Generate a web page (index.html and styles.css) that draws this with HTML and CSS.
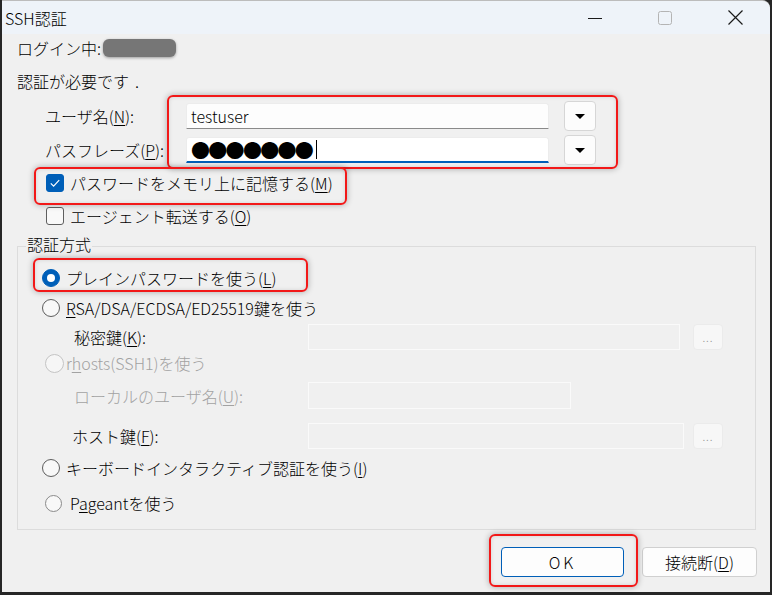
FILE: index.html
```html
<!DOCTYPE html>
<html lang="ja">
<head>
<meta charset="utf-8">
<title>SSH認証</title>
<link rel="stylesheet" href="styles.css">
</head>
<body>
<div class="page">
  <div class="window">
    <div class="titlebar">
      <span class="title">SSH認証</span>
      <div class="controls">
        <div class="ctl"><svg width="16" height="16" viewBox="0 0 16 16"><path d="M1 8.5h14" stroke="#1a1a1a" stroke-width="1"/></svg></div>
        <div class="ctl"><svg width="16" height="16" viewBox="0 0 16 16"><rect x="1.5" y="1.5" width="13" height="13" rx="2" fill="none" stroke="#b4b4b4" stroke-width="1"/></svg></div>
        <div class="ctl"><svg width="17" height="17" viewBox="0 0 17 17"><path d="M1.5 1.5l14 14M15.5 1.5l-14 14" stroke="#1a1a1a" stroke-width="1.2"/></svg></div>
      </div>
    </div>
    <div class="content">
      <div class="row login">ログイン中:<span class="blur"></span></div>
      <div class="row need">認証が必要です<span class="dot">.</span></div>

      <div class="field user">
        <span class="flabel">ユーザ名(<u>N</u>):</span>
        <div class="input">testuser</div>
        <div class="dd"><span class="tri"></span></div>
      </div>
      <div class="field pass">
        <span class="flabel">パスフレーズ(<u>P</u>):</span>
        <div class="input focus"><span class="dots">●●●●●●●</span><span class="caret"></span></div>
        <div class="dd"><span class="tri"></span></div>
      </div>

      <div class="check c1">
        <span class="box on"><svg width="18" height="18" viewBox="0 0 18 18"><path d="M4.8 9.3l2.8 2.8 5.6-6" fill="none" stroke="#fff" stroke-width="1.2"/></svg></span>
        <span>パスワードをメモリ上に記憶する(<u>M</u>)</span>
      </div>
      <div class="check c2">
        <span class="box"></span>
        <span>エージェント転送する(<u>O</u>)</span>
      </div>

      <fieldset class="group">
        <legend>認証方式</legend>
        <div class="radio r1"><span class="rb on"></span><span>プレインパスワードを使う(<u>L</u>)</span></div>
        <div class="radio r2"><span class="rb"></span><span><u>R</u>SA/DSA/ECDSA/ED25519鍵を使う</span></div>
        <div class="sub s1"><span class="slabel">秘密鍵(<u>K</u>):</span><div class="dis w372"></div><div class="more">...</div></div>
        <div class="radio r3 disabled"><span class="rb dim"></span><span>r<u>h</u>osts(SSH1)を使う</span></div>
        <div class="sub s2 disabled"><span class="slabel">ローカルのユーザ名(<u>U</u>):</span><div class="dis w263"></div></div>
        <div class="sub s3"><span class="slabel wide">ホスト鍵(<u>F</u>):</span><div class="dis w376"></div><div class="more">...</div></div>
        <div class="radio r4"><span class="rb"></span><span>キーボードインタラクティブ認証を使う(<u>I</u>)</span></div>
        <div class="radio r5"><span class="rb small"></span><span>P<u>a</u>geantを使う</span></div>
      </fieldset>

      <div class="buttons">
        <div class="btn ok">OK</div>
        <div class="btn">接続断(<u>D</u>)</div>
      </div>
    </div>
  </div>

  <div class="hl hl1"></div>
  <div class="hl hl2"></div>
  <div class="hl hl3"></div>
  <div class="hl hl4"></div>
</div>
</body>
</html>
```
FILE: styles.css
```css
* { box-sizing: border-box; }
html, body { margin: 0; padding: 0; }
body {
  background: #262626;
  font-family: "Noto Sans CJK JP", "Noto Sans", sans-serif;
  font-size: 16px;
  font-weight: 300;
  color: #000;
}
.page {
  position: relative;
  width: 772px;
  height: 595px;
  overflow: hidden;
}
.window {
  margin-left: 2px;
  width: 768px;
  height: 592px;
  background: #f0f0f0;
  border-top: 1px solid #bcbcbc;
  border-top-right-radius: 8px;
  overflow: hidden;
  display: flex;
  flex-direction: column;
}
.titlebar {
  height: 33px;
  background: #eef3f9;
  display: flex;
  align-items: center;
}
.title {
  padding-left: 3px;
  line-height: 20px;
  margin-top: 1px;
}
.controls {
  margin-left: auto;
  display: flex;
}
.ctl {
  width: 70px;
  height: 33px;
  display: flex;
  align-items: center;
  justify-content: center;
}
.ctl svg { display: block; }

.content { display: flex; flex-direction: column; }
.row {
  padding-left: 15px;
  height: 20px;
  line-height: 20px;
  display: flex;
  align-items: center;
}
.login { margin-top: 4px; }
.need { margin-top: 13px; }
.dot { margin-left: 6px; }
.blur {
  display: inline-block;
  margin-left: 2px;
  width: 73px;
  height: 18px;
  background: #767676;
  border-radius: 6px;
  filter: blur(0.6px);
  box-shadow: 0 1px 3px rgba(0,0,0,0.35);
}

.field {
  height: 30px;
  padding-left: 43px;
  display: flex;
  align-items: center;
}
.user { margin-top: 10px; }
.pass { margin-top: 4px; }
.flabel { width: 141px; line-height: 20px; }
u { text-decoration: underline; text-underline-offset: 2px; text-decoration-thickness: 1px; }
.input {
  width: 363px;
  height: 26px;
  background: #fdfdfd;
  border: 1px solid #ececec;
  border-bottom: 1px solid #8a8a8a;
  border-radius: 3px 3px 0 0;
  padding-left: 4px;
  line-height: 24px;
  margin-right: 15px;
  display: flex;
  align-items: center;
}
.input.focus {
  height: 26px;
  background: #fff;
  border-bottom: 2px solid #005fb8;
}
.dots {
  font-size: 19px;
  font-weight: 400;
  letter-spacing: -1.7px;
  line-height: 22px;
}
.caret {
  display: inline-block;
  width: 1px;
  height: 19px;
  background: #000;
  margin-left: 4px;
}
.dd {
  width: 32px;
  height: 30px;
  background: #fcfcfc;
  border: 1px solid #d6d6d6;
  border-radius: 4px;
  display: flex;
  align-items: center;
  justify-content: center;
}
.tri {
  width: 0; height: 0;
  border-left: 5px solid transparent;
  border-right: 5px solid transparent;
  border-top: 5px solid #000;
}

.check {
  height: 18px;
  padding-left: 44px;
  display: flex;
  align-items: center;
  gap: 6px;
  line-height: 20px;
}
.c1 { margin-top: 9px; }
.c2 { margin-top: 15px; }
.box {
  width: 18px;
  height: 18px;
  border: 1px solid #5f5f5f;
  border-radius: 3px;
  background: #f9f9f9;
  display: block;
}
.box.on {
  background: #005fb8;
  border-color: #005fb8;
}
.box svg { display: block; margin: -1px; }

.group {
  margin: 11px 14px 0 15px;
  padding: 0 0 17px 0;
  border: 1px solid #dcdcdc;
  min-width: 0;
}
.group legend {
  margin-left: 8px;
  padding: 0 1px;
  line-height: 16px;
  height: 20px;
}
.radio {
  height: 18px;
  padding-left: 24px;
  display: flex;
  align-items: center;
  gap: 6px;
  line-height: 20px;
}
.r1 { margin-top: 13px; }
.r2 { margin-top: 12px; }
.r3 { margin-top: 4px; gap: 2px; }
.r4 { margin-top: 10px; }
.r5 { margin-top: 17px; gap: 8px; }
.rb {
  width: 18px;
  height: 18px;
  border-radius: 50%;
  border: 1px solid #5d5d5d;
  background: #f8f8f8;
  display: block;
  flex: none;
}
.rb.on {
  background: #005fb8;
  border-color: #005fb8;
  position: relative;
}
.rb.on::after {
  content: "";
  position: absolute;
  left: 4px; top: 4px;
  width: 8px; height: 8px;
  border-radius: 50%;
  background: #fff;
}
.rb.dim {
  width: 19px; height: 19px;
  margin-left: 3px;
  border-color: #c4c4c4;
  background: #f6f6f6;
}
.rb.small {
  width: 17px; height: 17px;
  margin-left: 3px;
  border-color: #8a8a8a;
}
.disabled { color: #a2a2a2; }

.sub {
  display: flex;
  align-items: center;
  padding-left: 56px;
  line-height: 20px;
}
.s1 { margin-top: 7px; height: 26px; }
.s2 { margin-top: 10px; height: 27px; }
.s3 { margin-top: 14px; height: 26px; padding-left: 54px; }
.slabel { width: 234px; flex: none; }
.slabel.wide { width: 236px; }
.dis {
  height: 100%;
  border: 1px solid #fafafa;
  background: #f0f0f0;
  flex: none;
}
.w372 { width: 372px; margin-right: 13px; }
.w376 { width: 376px; margin-right: 9px; }
.w263 { width: 263px; }
.more {
  width: 30px;
  height: 26px;
  background: #f7f7f7;
  border: 1px solid #ebebeb;
  border-radius: 4px;
  color: #9a9a9a;
  font-size: 11px;
  letter-spacing: 1px;
  text-align: center;
  line-height: 24px;
  flex: none;
}

.buttons {
  margin-top: 17px;
  padding-right: 13px;
  display: flex;
  justify-content: flex-end;
  gap: 18px;
}
.btn {
  width: 115px;
  height: 30px;
  background: #fdfdfd;
  border: 1px solid #d0d0d0;
  border-radius: 4px;
  text-align: center;
  line-height: 28px;
}
.btn.ok {
  width: 123px;
  border-color: #005fb8;
  letter-spacing: 3px;
}

.hl {
  position: absolute;
  border: 2px solid #f21818;
  border-radius: 6px;
  box-shadow: 0 0 6px rgba(0,0,0,0.3), inset 0 0 4px rgba(0,0,0,0.12);
}
.hl1 { left: 167px; top: 95px; width: 451px; height: 74px; }
.hl2 { left: 34px; top: 167px; width: 313px; height: 38px; }
.hl3 { left: 33px; top: 258px; width: 275px; height: 34px; }
.hl4 { left: 489px; top: 534px; width: 149px; height: 53px; }
```
